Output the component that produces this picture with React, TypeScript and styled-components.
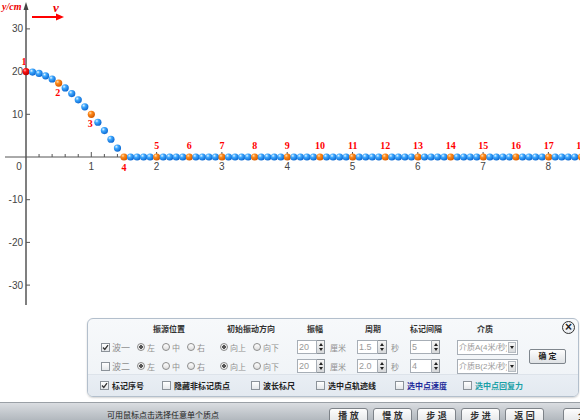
import { FC } from 'react';
import styled, { createGlobalStyle } from 'styled-components';

const CJK = `"Liberation Sans", "Noto Sans CJK SC", sans-serif`;

const GlobalStyle = createGlobalStyle`
  html, body {
    margin: 0;
    padding: 0;
    background: #fff;
  }
  body {
    font-family: ${CJK};
  }
`;

// chart geometry
const X0 = 26;
const Y0 = 157;
const UX = 65.3;
const UY = 4.27;
const STEP = 98 / 15;

interface Particle {
  x: number;
  y: number;
  mark: number;
}

const buildParticles = (): Particle[] => {
  const list: Particle[] = [];
  for (let i = 0; X0 + i * STEP <= 586; i++) {
    const x = X0 + i * STEP;
    const y = i < 15 ? Y0 - 20 * UY * Math.cos(((Math.PI / 2) * i) / 15) : Y0;
    list.push({ x, y, mark: i % 5 === 0 ? i / 5 + 1 : 0 });
  }
  return list;
};

const labelPos = (p: Particle) => {
  if (p.mark === 1) return { x: p.x - 2, y: p.y - 7 };
  if (p.mark === 2 || p.mark === 3) return { x: p.x - 1, y: p.y + 13 };
  if (p.mark === 4) return { x: p.x, y: p.y + 14 };
  return { x: p.x, y: p.y - 8 };
};

const WaveChart: FC = () => {
  const particles = buildParticles();
  const yTicks = [30, 20, 10, -10, -20, -30];
  const minor: number[] = [];
  for (let k = 1; X0 + k * (UX / 5) < 580; k++) minor.push(k);

  return (
    <ChartSvg width={580} height={316} viewBox="0 0 580 316">
      <defs>
        <radialGradient id="gBlue" cx="35%" cy="32%" r="70%">
          <stop offset="0" stopColor="#e6f6ff" />
          <stop offset="0.35" stopColor="#3fa9ff" />
          <stop offset="1" stopColor="#0a66d0" />
        </radialGradient>
        <radialGradient id="gOrange" cx="35%" cy="32%" r="70%">
          <stop offset="0" stopColor="#ffe0b8" />
          <stop offset="0.35" stopColor="#ff8a1a" />
          <stop offset="1" stopColor="#d35a00" />
        </radialGradient>
        <radialGradient id="gRed" cx="35%" cy="32%" r="70%">
          <stop offset="0" stopColor="#ffb0b0" />
          <stop offset="0.35" stopColor="#ff1010" />
          <stop offset="1" stopColor="#b80000" />
        </radialGradient>
      </defs>

      {/* y axis */}
      <line x1={X0} y1={8} x2={X0} y2={305} stroke="#555" strokeWidth={1.5} />
      <polygon points={`${X0},2 ${X0 - 2.5},10 ${X0 + 2.5},10`} fill="#444" />
      {yTicks.map((v) => {
        const y = Y0 - v * UY;
        return (
          <g key={v}>
            <line x1={X0} y1={y} x2={X0 + 4} y2={y} stroke="#555" />
            <TickText x={X0 - 3} y={y + 3.5} textAnchor="end">
              {v}
            </TickText>
          </g>
        );
      })}

      {/* x axis */}
      <line x1={5} y1={Y0} x2={580} y2={Y0} stroke="#555" />
      {minor.map((k) => {
        const x = X0 + k * (UX / 5);
        const major = k % 5 === 0;
        return <line key={k} x1={x} y1={Y0} x2={x} y2={Y0 - (major ? 5 : 3)} stroke="#555" />;
      })}
      <TickText x={19} y={170} textAnchor="middle">
        0
      </TickText>
      {[1, 2, 3, 4, 5, 6, 7, 8].map((n) => (
        <TickText key={n} x={X0 + n * UX} y={170} textAnchor="middle">
          {n}
        </TickText>
      ))}

      {/* axis captions */}
      <AxisCaption x={2} y={10}>
        y/cm
      </AxisCaption>
      <line x1={32} y1={17} x2={58} y2={17} stroke="#f00" strokeWidth={2} />
      <polygon points="64,17 56,13.5 56,20.5" fill="#f00" />
      <SpeedCaption x={53} y={12}>
        v
      </SpeedCaption>

      {/* particles */}
      {particles.map((p, i) => (
        <circle
          key={i}
          cx={p.x}
          cy={p.y}
          r={3.6}
          fill={p.mark === 1 ? 'url(#gRed)' : p.mark ? 'url(#gOrange)' : 'url(#gBlue)'}
        />
      ))}
      {particles
        .filter((p) => p.mark)
        .map((p) => {
          const pos = labelPos(p);
          return (
            <MarkText key={p.mark} x={pos.x} y={pos.y} textAnchor="middle">
              {p.mark}
            </MarkText>
          );
        })}
    </ChartSvg>
  );
};

const CheckMark: FC<{ on?: boolean }> = ({ on }) => (
  <CheckBox>
    {on && (
      <svg width="7" height="7" viewBox="0 0 7 7">
        <path d="M1 3.5 L2.8 5.4 L6 1.2" fill="none" stroke="#333" strokeWidth="1.3" />
      </svg>
    )}
  </CheckBox>
);

const Radio: FC<{ on?: boolean; label: string }> = ({ on, label }) => (
  <RadioItem>
    <RadioDot $on={on} />
    <DimText>{label}</DimText>
  </RadioItem>
);

const Spinner: FC<{ value: string; field: number; btn: number }> = ({ value, field, btn }) => (
  <SpinBox>
    <SpinField style={{ width: field }}>{value}</SpinField>
    <SpinBtn style={{ width: btn }}>
      <Arrow $up />
      <Arrow />
    </SpinBtn>
  </SpinBox>
);

const Select: FC<{ value: string }> = ({ value }) => (
  <SelectBox>
    <SelectText>{value}</SelectText>
    <SelectBtn>
      <Arrow />
    </SelectBtn>
  </SelectBox>
);

const WaveRow: FC<{ name: string; checked?: boolean; amp: string; period: string; gap: string; medium: string }> = ({
  name,
  checked,
  amp,
  period,
  gap,
  medium,
}) => (
  <>
    <Cell>
      <CheckMark on={checked} />
      <NameText>{name}</NameText>
    </Cell>
    <Cell>
      <Radio on label="左" />
      <Radio label="中" />
      <Radio label="右" />
    </Cell>
    <Cell $pad={2}>
      <Radio on label="向上" />
      <Radio label="向下" />
    </Cell>
    <Cell $pad={1}>
      <Spinner value={amp} field={20} btn={8} />
      <Unit $ml={5}>厘米</Unit>
    </Cell>
    <Cell $pad={1}>
      <Spinner value={period} field={21} btn={9} />
      <Unit $ml={4}>秒</Unit>
    </Cell>
    <Cell $pad={1}>
      <Spinner value={gap} field={22} btn={8} />
    </Cell>
    <Cell $pad={1}>
      <Select value={medium} />
    </Cell>
  </>
);

const options = [
  { label: '标记序号', on: true, w: 62, color: '#222' },
  { label: '隐藏非标记质点', w: 89, color: '#222' },
  { label: '波长标尺', w: 65, color: '#222' },
  { label: '选中点轨迹线', w: 79, color: '#222' },
  { label: '选中点速度', w: 68, color: '#1c2a9a' },
  { label: '选中点回复力', w: 100, color: '#1aa0a6' },
];

const ControlPanel: FC = () => (
  <Panel>
    <CloseBtn>×</CloseBtn>
    <PanelGrid>
      <span />
      <Header $left={16}>振源位置</Header>
      <Header $left={9}>初始振动方向</Header>
      <Header $left={11}>振幅</Header>
      <Header $left={9}>周期</Header>
      <Header $left={1}>标记间隔</Header>
      <Header $left={21}>介质</Header>
      <span />
      <WaveRow name="波一" checked amp="20" period="1.5" gap="5" medium="介质A(4米/秒)" />
      <OkCell>
        <OkButton>确 定</OkButton>
      </OkCell>
      <WaveRow name="波二" amp="20" period="2.0" gap="4" medium="介质B(2米/秒)" />
    </PanelGrid>
    <OptionStrip>
      {options.map((o) => (
        <OptionItem key={o.label} $w={o.w}>
          <CheckMark on={o.on} />
          <OptionText $color={o.color}>{o.label}</OptionText>
        </OptionItem>
      ))}
    </OptionStrip>
  </Panel>
);

const App: FC = () => (
  <>
    <GlobalStyle />
    <Page>
      <WaveChart />
      <PanelRow>
        <ControlPanel />
      </PanelRow>
      <BottomBar>
        <Hint>可用鼠标点击选择任意单个质点</Hint>
        <BarButton>播 放</BarButton>
        <BarButton>慢 放</BarButton>
        <BarButton>步 退</BarButton>
        <BarButton>步 进</BarButton>
        <BarButton>返 回</BarButton>
        <BarButton $ml={14}>全</BarButton>
      </BottomBar>
    </Page>
  </>
);

export default App;

const Page = styled.div`
  width: 580px;
  height: 420px;
  display: flex;
  flex-direction: column;
  overflow: hidden;
  background: #fff;
`;

const ChartSvg = styled.svg`
  display: block;
  flex: none;
`;

const TickText = styled.text`
  font-family: 'Liberation Sans', sans-serif;
  font-size: 10px;
  fill: #444;
`;

const MarkText = styled.text`
  font-family: 'Liberation Serif', serif;
  font-size: 10px;
  font-weight: bold;
  fill: #f00;
`;

const AxisCaption = styled.text`
  font-family: 'Liberation Serif', serif;
  font-size: 10px;
  font-style: italic;
  font-weight: bold;
  fill: #e00;
`;

const SpeedCaption = styled.text`
  font-family: 'Liberation Serif', serif;
  font-size: 13px;
  font-style: italic;
  font-weight: bold;
  fill: #e00;
`;

const PanelRow = styled.div`
  height: 86px;
  flex: none;
  padding: 2px 1px 0 87px;
  box-sizing: border-box;
`;

const Panel = styled.div`
  position: relative;
  height: 79px;
  box-sizing: border-box;
  border: 1px solid #b3bfcc;
  border-radius: 6px;
  background: linear-gradient(#f7f9fb, #eef2f6);
  box-shadow: 0 1px 2px rgba(0, 0, 0, 0.18);
  overflow: hidden;
  display: flex;
  flex-direction: column;
`;

const CloseBtn = styled.div`
  position: absolute;
  top: 2px;
  right: 3px;
  width: 11px;
  height: 11px;
  border: 1.5px solid #333;
  border-radius: 50%;
  background: radial-gradient(circle at 40% 35%, #fff, #dde2e8);
  color: #222;
  font: bold 12px/11px 'Liberation Sans', sans-serif;
  text-align: center;
`;

const PanelGrid = styled.div`
  display: grid;
  grid-template-columns: 36px 81px 78px 60px 53px 47px 72px 40px;
  grid-template-rows: 12px 16px 16px;
  row-gap: 3px;
  padding: 5px 0 0 13px;
  height: 55px;
  box-sizing: border-box;
`;

const Header = styled.div<{ $left: number }>`
  padding-left: ${(p) => p.$left}px;
  font-family: ${CJK};
  font-size: 8px;
  font-weight: bold;
  line-height: 12px;
  color: #333;
  white-space: nowrap;
`;

const Cell = styled.div<{ $pad?: number }>`
  display: flex;
  align-items: center;
  padding-left: ${(p) => p.$pad ?? 0}px;
  white-space: nowrap;
`;

const CheckBox = styled.span`
  width: 7px;
  height: 7px;
  flex: none;
  border: 1px solid #8c939a;
  background: linear-gradient(#fff, #e4e7ea);
  display: flex;
  align-items: center;
  justify-content: center;
  box-sizing: content-box;
`;

const NameText = styled.span`
  margin-left: 2px;
  font-family: ${CJK};
  font-size: 9px;
  color: #8e8e8e;
`;

const RadioItem = styled.span`
  display: flex;
  align-items: center;
  margin-right: 7px;
`;

const RadioDot = styled.span<{ $on?: boolean }>`
  width: 6px;
  height: 6px;
  border-radius: 50%;
  border: 1px solid #8c8c8c;
  background: ${(p) =>
    p.$on ? 'radial-gradient(circle, #555 0 1.6px, #eee 2px)' : 'linear-gradient(#fff, #ddd)'};
  margin-right: 2px;
`;

const DimText = styled.span`
  font-family: ${CJK};
  font-size: 8px;
  color: #909090;
`;

const Unit = styled.span<{ $ml: number }>`
  margin-left: ${(p) => p.$ml}px;
  font-family: ${CJK};
  font-size: 8px;
  color: #909090;
`;

const SpinBox = styled.div`
  display: flex;
  height: 14px;
`;

const SpinField = styled.div`
  border: 1px solid #a7aeb6;
  background: #fff;
  color: #999;
  font-family: 'Liberation Sans', sans-serif;
  font-size: 9px;
  line-height: 12px;
  padding-left: 1px;
  box-sizing: border-box;
`;

const SpinBtn = styled.div`
  border: 1px solid #8c939a;
  border-left: none;
  background: linear-gradient(#f6f6f6, #d6d8da);
  box-sizing: border-box;
  display: flex;
  flex-direction: column;
  align-items: center;
  justify-content: space-evenly;
`;

const Arrow = styled.span<{ $up?: boolean }>`
  width: 0;
  height: 0;
  border-left: 2.5px solid transparent;
  border-right: 2.5px solid transparent;
  ${(p) => (p.$up ? 'border-bottom: 3px solid #222;' : 'border-top: 3px solid #222;')}
`;

const SelectBox = styled.div`
  width: 61px;
  height: 15px;
  display: flex;
  border: 1px solid #a7aeb6;
  background: #fff;
  box-sizing: border-box;
`;

const SelectText = styled.span`
  flex: 1;
  font-family: ${CJK};
  font-size: 8px;
  line-height: 13px;
  color: #999;
  padding-left: 1px;
  overflow: hidden;
  white-space: nowrap;
`;

const SelectBtn = styled.span`
  width: 8px;
  margin: 1px;
  border: 1px solid #b5bbc1;
  background: linear-gradient(#f6f6f6, #d8dadc);
  display: flex;
  align-items: center;
  justify-content: center;
  box-sizing: border-box;
`;

const OkCell = styled.div`
  grid-column: 8;
  grid-row: 2 / 4;
  display: flex;
  align-items: center;
  padding-left: 1px;
`;

const OkButton = styled.div`
  width: 37px;
  height: 15px;
  border: 1px solid #7f868d;
  border-radius: 2px;
  background: linear-gradient(#fdfdfd, #dfe2e5);
  box-sizing: border-box;
  font-family: ${CJK};
  font-size: 8px;
  font-weight: bold;
  line-height: 13px;
  text-align: center;
  color: #222;
`;

const OptionStrip = styled.div`
  flex: 1;
  display: flex;
  align-items: center;
  padding-left: 12px;
  border-top: 1px solid #dde3ea;
  background: linear-gradient(#e9eef4, #e3e9f0);
`;

const OptionItem = styled.div<{ $w: number }>`
  width: ${(p) => p.$w}px;
  flex: none;
  display: flex;
  align-items: center;
`;

const OptionText = styled.span<{ $color: string }>`
  margin-left: 3px;
  font-family: ${CJK};
  font-size: 8px;
  font-weight: bold;
  color: ${(p) => p.$color};
  white-space: nowrap;
`;

const BottomBar = styled.div`
  flex: 1;
  display: flex;
  align-items: flex-start;
  gap: 5px;
  padding: 5px 0 0 107px;
  box-sizing: border-box;
  border-top: 1px solid #9aa0a6;
  background: linear-gradient(#dadde1, #b2b8be);
  overflow: hidden;
`;

const Hint = styled.span`
  width: 217px;
  flex: none;
  font-family: ${CJK};
  font-size: 8px;
  line-height: 14px;
  color: #222;
  padding-top: 1px;
`;

const BarButton = styled.div<{ $ml?: number }>`
  width: 39px;
  height: 16px;
  flex: none;
  margin-left: ${(p) => p.$ml ?? 0}px;
  border: 1px solid #7d8288;
  border-radius: 3px;
  background: linear-gradient(#fdfdfd, #e2e4e6);
  box-sizing: border-box;
  font-family: ${CJK};
  font-size: 9px;
  font-weight: bold;
  line-height: 14px;
  text-align: center;
  color: #333;
`;
